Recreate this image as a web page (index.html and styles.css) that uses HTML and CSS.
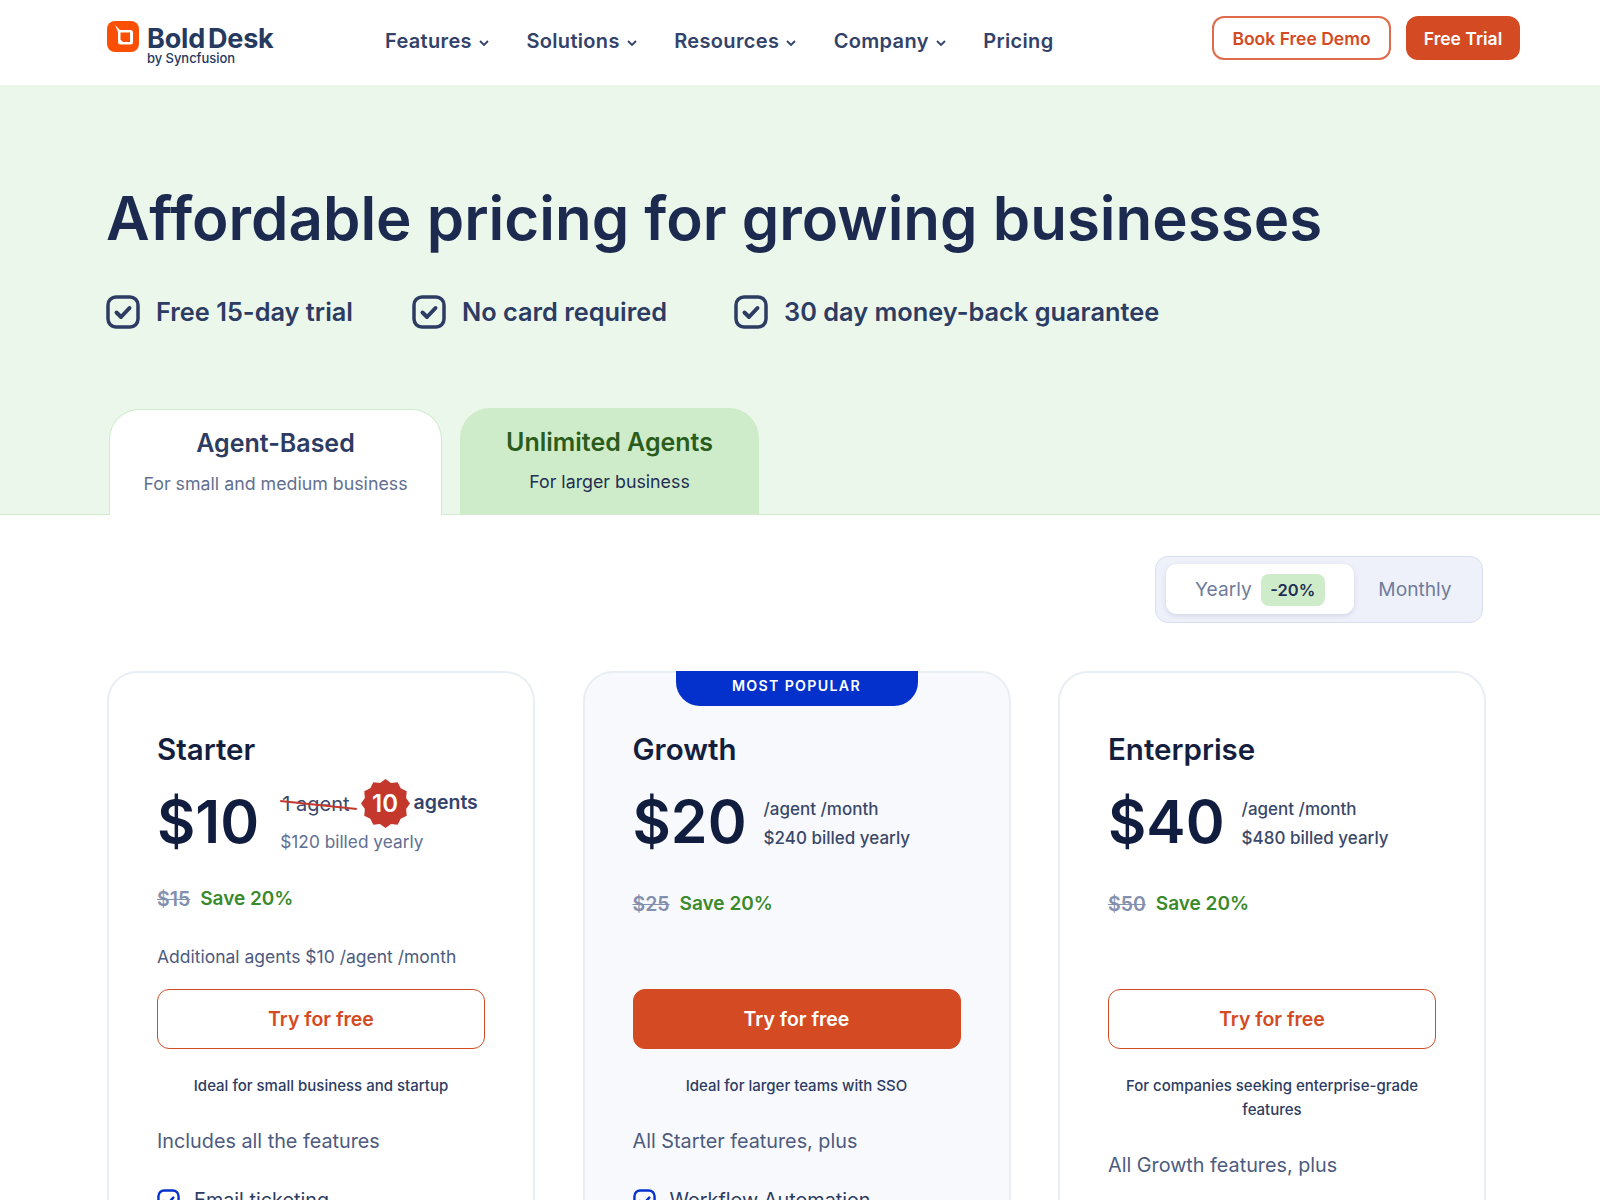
FILE: index.html
```html
<!DOCTYPE html>
<html lang="en">
<head>
<meta charset="utf-8">
<title>BoldDesk Pricing</title>
<link rel="stylesheet" href="styles.css">
</head>
<body>
<header class="nav">
  <a class="logo" href="#">
    <svg class="logo-mark" viewBox="0 0 32 31" width="32" height="31"><path fill="#fb4f06" d="M8 0H24a8 8 0 0 1 8 8V23a8 8 0 0 1-8 8H8a8 8 0 0 1-8-8V8a8 8 0 0 1 8-8Z"/><path fill="#fff" d="M8 4 13 9H23.500a2.500 2.500 0 0 1 2.500 2.500V21a2.500 2.500 0 0 1-2.500 2.500H13.500A2.500 2.500 0 0 1 11 21V11Z"/><path fill="#fb4f06" d="M13.500 11.500H23V21H16L13.500 18.500Z"/></svg>
    <span class="logo-text"><span class="logo-name">Bold<span class="logo-gap">Desk</span></span><span class="logo-sub">by Syncfusion</span></span>
  </a>
  <nav class="menu">
    <a href="#">Features<svg class="chev" viewBox="0 0 10 6"><path d="M1 1l4 4 4-4"/></svg></a>
    <a href="#">Solutions<svg class="chev" viewBox="0 0 10 6"><path d="M1 1l4 4 4-4"/></svg></a>
    <a href="#">Resources<svg class="chev" viewBox="0 0 10 6"><path d="M1 1l4 4 4-4"/></svg></a>
    <a href="#">Company<svg class="chev" viewBox="0 0 10 6"><path d="M1 1l4 4 4-4"/></svg></a>
    <a href="#">Pricing</a>
  </nav>
  <div class="nav-actions">
    <a class="btn-demo" href="#">Book Free Demo</a>
    <a class="btn-trial" href="#">Free Trial</a>
  </div>
</header>

<section class="hero">
  <h1>Affordable pricing for growing businesses</h1>
  <ul class="perks">
    <li><svg class="perk-icon" viewBox="0 0 34 34"><rect x="2" y="2" width="30" height="30" rx="8"/><path class="tick" d="M10.500 17.500l4.500 4.500 8.500-9"/></svg>Free 15-day trial</li>
    <li><svg class="perk-icon" viewBox="0 0 34 34"><rect x="2" y="2" width="30" height="30" rx="8"/><path class="tick" d="M10.500 17.500l4.500 4.500 8.500-9"/></svg>No card required</li>
    <li class="perk-last"><svg class="perk-icon" viewBox="0 0 34 34"><rect x="2" y="2" width="30" height="30" rx="8"/><path class="tick" d="M10.500 17.500l4.500 4.500 8.500-9"/></svg>30 day money-back guarantee</li>
  </ul>
  <div class="tabs">
    <div class="tab tab-active"><strong>Agent-Based</strong><span>For small and medium business</span></div>
    <div class="tab tab-other"><strong>Unlimited Agents</strong><span>For larger business</span></div>
  </div>
</section>

<main class="pricing">
  <div class="billing-row">
    <div class="billing">
      <div class="billing-on">Yearly<span class="off">-20%</span></div>
      <div class="billing-off">Monthly</div>
    </div>
  </div>
  <div class="cards">
    <article class="card">
      <h2>Starter</h2>
      <div class="price-row">
        <div class="amount">$10</div>
        <div class="price-note note-starter">
          <div class="agents"><span class="struck">1 agent</span><span class="seal"><svg viewBox="0 0 48 48"><path fill="#c4372c" d="M24 0l5.400 3.800 6.500-.6 3 5.900 5.900 3-.6 6.500L48 24l-3.800 5.400.6 6.500-5.900 3-3 5.900-6.500-.6L24 48l-5.400-3.800-6.500.6-3-5.900-5.900-3 .6-6.500L0 24l3.800-5.400-.6-6.500 5.900-3 3-5.900 6.500.6Z"/></svg><b>10</b></span><span class="agents-word">agents</span></div>
          <div class="billed-muted">$120 billed yearly</div>
        </div>
      </div>
      <div class="save save-starter"><s>$15</s><span>Save 20%</span></div>
      <p class="extra">Additional agents $10 /agent /month</p>
      <a class="try" href="#">Try for free</a>
      <p class="ideal">Ideal for small business and startup</p>
      <h3>Includes all the features</h3>
      <ul class="features"><li><svg class="feat-icon" viewBox="0 0 24 24"><rect x="1.500" y="1.500" width="21" height="21" rx="6"/><path d="M7 12.500l3.500 3.500 6.500-7"/></svg>Email ticketing</li></ul>
    </article>
    <article class="card card-popular">
      <div class="ribbon">MOST POPULAR</div>
      <h2>Growth</h2>
      <div class="price-row">
        <div class="amount">$20</div>
        <div class="price-note"><div>/agent /month</div><div>$240 billed yearly</div></div>
      </div>
      <div class="save"><s>$25</s><span>Save 20%</span></div>
      <p class="extra"></p>
      <a class="try try-solid" href="#">Try for free</a>
      <p class="ideal">Ideal for larger teams with SSO</p>
      <h3>All Starter features, plus</h3>
      <ul class="features"><li><svg class="feat-icon" viewBox="0 0 24 24"><rect x="1.500" y="1.500" width="21" height="21" rx="6"/><path d="M7 12.500l3.500 3.500 6.500-7"/></svg>Workflow Automation</li></ul>
    </article>
    <article class="card">
      <h2>Enterprise</h2>
      <div class="price-row">
        <div class="amount">$40</div>
        <div class="price-note"><div>/agent /month</div><div>$480 billed yearly</div></div>
      </div>
      <div class="save"><s>$50</s><span>Save 20%</span></div>
      <p class="extra"></p>
      <a class="try" href="#">Try for free</a>
      <p class="ideal">For companies seeking enterprise-grade features</p>
      <h3>All Growth features, plus</h3>
    </article>
  </div>
</main>
</body>
</html>
```
FILE: styles.css
```css
* { box-sizing: border-box; }
html, body { margin: 0; height: 1200px; overflow: hidden; }
body { font-family: Inter, "Liberation Sans", sans-serif; font-optical-sizing: none; color: #1f2e52; background: #fff; }
a { text-decoration: none; color: inherit; }
ul { list-style: none; margin: 0; padding: 0; }

.nav { height: 85px; display: flex; align-items: flex-start; padding: 16px 80px 0 107px; }
.logo { display: flex; align-items: flex-start; gap: 8px; width: 278px; padding-top: 5px; }
.logo-mark { flex: none; }
.logo-text { display: flex; flex-direction: column; padding-top: 6px; }
.logo-name { font-size: 27px; font-weight: 700; line-height: 24px; color: #26395f; letter-spacing: -0.2px; }
.logo-gap { margin-left: 3px; }
.logo-sub { font-size: 13px; line-height: 15px; font-weight: 500; color: #26395f; letter-spacing: -0.05px; }
.menu { display: flex; gap: 37.500px; font-size: 20px; font-weight: 600; color: #334269; padding-top: 12px; line-height: 26px; letter-spacing: 0.33px; }
.menu a { display: flex; align-items: center; }
.chev { width: 10px; height: 6px; margin-left: 7px; margin-top: 3px; fill: none; stroke: #334269; stroke-width: 1.800; }
.nav-actions { margin-left: auto; display: flex; gap: 15px; font-size: 17.500px; font-weight: 600; }
.btn-demo, .btn-trial { height: 44px; display: flex; align-items: center; justify-content: center; border-radius: 12px; }
.btn-demo { width: 179px; border: 2px solid #e06a4c; color: #d44a22; background: #fff; }
.btn-trial { width: 114px; background: #d44a22; color: #fff; }

.hero { height: 430px; background: #ecf7ec; border-bottom: 1px solid #cfeccb; padding: 100px 0 0 106px; display: flex; flex-direction: column; }
h1 { margin: 0; font-size: 60px; line-height: 66px; font-weight: 600; color: #1b2a4e; }
.perks { display: flex; gap: 59px; margin-top: 44px; font-size: 25.350px; font-weight: 600; color: #2d3c62; line-height: 34px; }
.perks li { display: flex; align-items: center; gap: 16px; }
.perks .perk-last { margin-left: 8px; }
.perk-icon { width: 34px; height: 34px; fill: none; stroke: #2d3c62; stroke-width: 3.500; stroke-linecap: round; stroke-linejoin: round; }
.tick { stroke-width: 4; }
.tabs { margin-top: auto; display: flex; gap: 18px; padding-left: 3px; align-items: flex-end; }
.tab { height: 106px; border-radius: 30px 30px 0 0; display: flex; flex-direction: column; align-items: center; padding-top: 18px; }
.tab strong { font-size: 25px; line-height: 32px; font-weight: 600; }
.tab span { font-size: 17.800px; line-height: 24px; margin-top: 12px; }
.tab-active { width: 333px; background: #fff; border: 1px solid #cfeccb; border-bottom: 0; margin-bottom: -1px; color: #2d3c62; padding-top: 17px; }
.tab-active span { color: #62708f; margin-top: 13px; }
.tab-other { width: 299px; background: #cfecca; color: #1f2e52; }
.tab-other strong { color: #2a5c1c; }

.pricing { padding: 41px 115px 0 107px; }
.billing-row { display: flex; justify-content: flex-end; padding-right: 2px; }
.billing { width: 328px; height: 67px; background: #eef1fa; border: 1px solid #d8dfee; border-radius: 13px; display: flex; align-items: center; padding: 0 10px 1px; font-size: 19.200px; color: #6f7c9a; }
.billing-on { width: 188px; height: 50px; background: #fff; border-radius: 11px; box-shadow: 0 2px 5px rgba(60,75,120,.15); display: flex; align-items: center; padding-left: 29px; gap: 9px; }
.off { width: 64px; height: 32px; margin-top: 2px; background: #cfecca; border-radius: 8px; display: flex; align-items: center; justify-content: center; font-size: 16.500px; font-weight: 600; color: #1f2e52; }
.billing-off { flex: 1; text-align: center; padding-left: 4px; }

.cards { display: grid; grid-template-columns: repeat(3, 428px); column-gap: 47.500px; margin-top: 48px; }
.card { position: relative; height: 700px; border: 2px solid #e9edf4; border-radius: 30px; padding: 58px 48px 0; background: #fff; }
.card-popular { background: #f8f9fc; }
.ribbon { position: absolute; top: -2px; left: 91px; width: 242px; height: 35px; background: #0431cc; color: #fff; border-radius: 0 0 24px 24px; font-size: 14.200px; font-weight: 600; letter-spacing: 1.300px; text-align: center; line-height: 29px; }
h2 { margin: 0; font-size: 29.500px; line-height: 36px; font-weight: 600; color: #141f40; }
.price-row { display: flex; align-items: flex-start; margin-top: 13px; height: 84px; }
.amount { font-size: 59px; line-height: 84px; font-weight: 600; color: #111d3f; margin-right: 17px; }
.price-note { font-size: 17px; line-height: 29px; font-weight: 500; color: #3a4869; padding-top: 15px; }
.note-starter { margin: -11px 0 0 4px; padding-top: 10px; }
.agents { display: flex; align-items: center; height: 48px; margin-left: 2px; }
.struck { position: relative; font-weight: 400; color: #3a4869; font-size: 20px; margin: 2px 11px 0 0; }
.struck::after { content: ""; position: absolute; left: -2px; right: -8px; top: 50%; height: 2px; background: #c4372c; transform: rotate(6deg); }
.seal { position: relative; width: 49px; height: 49px; display: flex; align-items: center; justify-content: center; margin-right: 4px; }
.seal svg { position: absolute; inset: 0; }
.seal b { position: relative; color: #fff; font-size: 24px; font-weight: 600; }
.agents-word { font-weight: 600; font-size: 19.500px; color: #33436b; margin-bottom: 2px; }
.billed-muted { font-weight: 400; color: #5f6f93; font-size: 17.300px; line-height: 24px; margin-top: 3px; }
.save { display: flex; gap: 10px; font-size: 19px; font-weight: 600; line-height: 26px; margin-top: 27px; color: #3a8a2c; }
.save s { color: #8390ad; font-size: 19.500px; }
.save-starter { margin-top: 22px; }
.extra { margin: 0; height: 32px; margin-top: 28px; font-size: 17.500px; line-height: 24px; color: #4d5b7e; }
.save-starter + .extra { margin-top: 33px; }
.try { display: flex; align-items: center; justify-content: center; height: 60px; margin-top: 12px; border: 1px solid #d44a22; border-radius: 12px; font-size: 19.500px; font-weight: 600; color: #d44a22; background: #fff; }
.try-solid { background: #d44a22; color: #fff; }
.ideal { margin: 25px 0 0; text-align: center; font-size: 15px; line-height: 24px; font-weight: 500; color: #2d3c62; }
h3 { margin: 27px 0 0; font-size: 19.800px; line-height: 32px; font-weight: 400; color: #4d5b7e; }
.features { margin-top: 30px; }
.features li { display: flex; align-items: center; gap: 14px; font-size: 19.800px; line-height: 26px; color: #2d3c62; }
.feat-icon { width: 23px; height: 23px; flex: none; fill: none; stroke: #0431cc; stroke-width: 2.500; stroke-linecap: round; stroke-linejoin: round; }
```
